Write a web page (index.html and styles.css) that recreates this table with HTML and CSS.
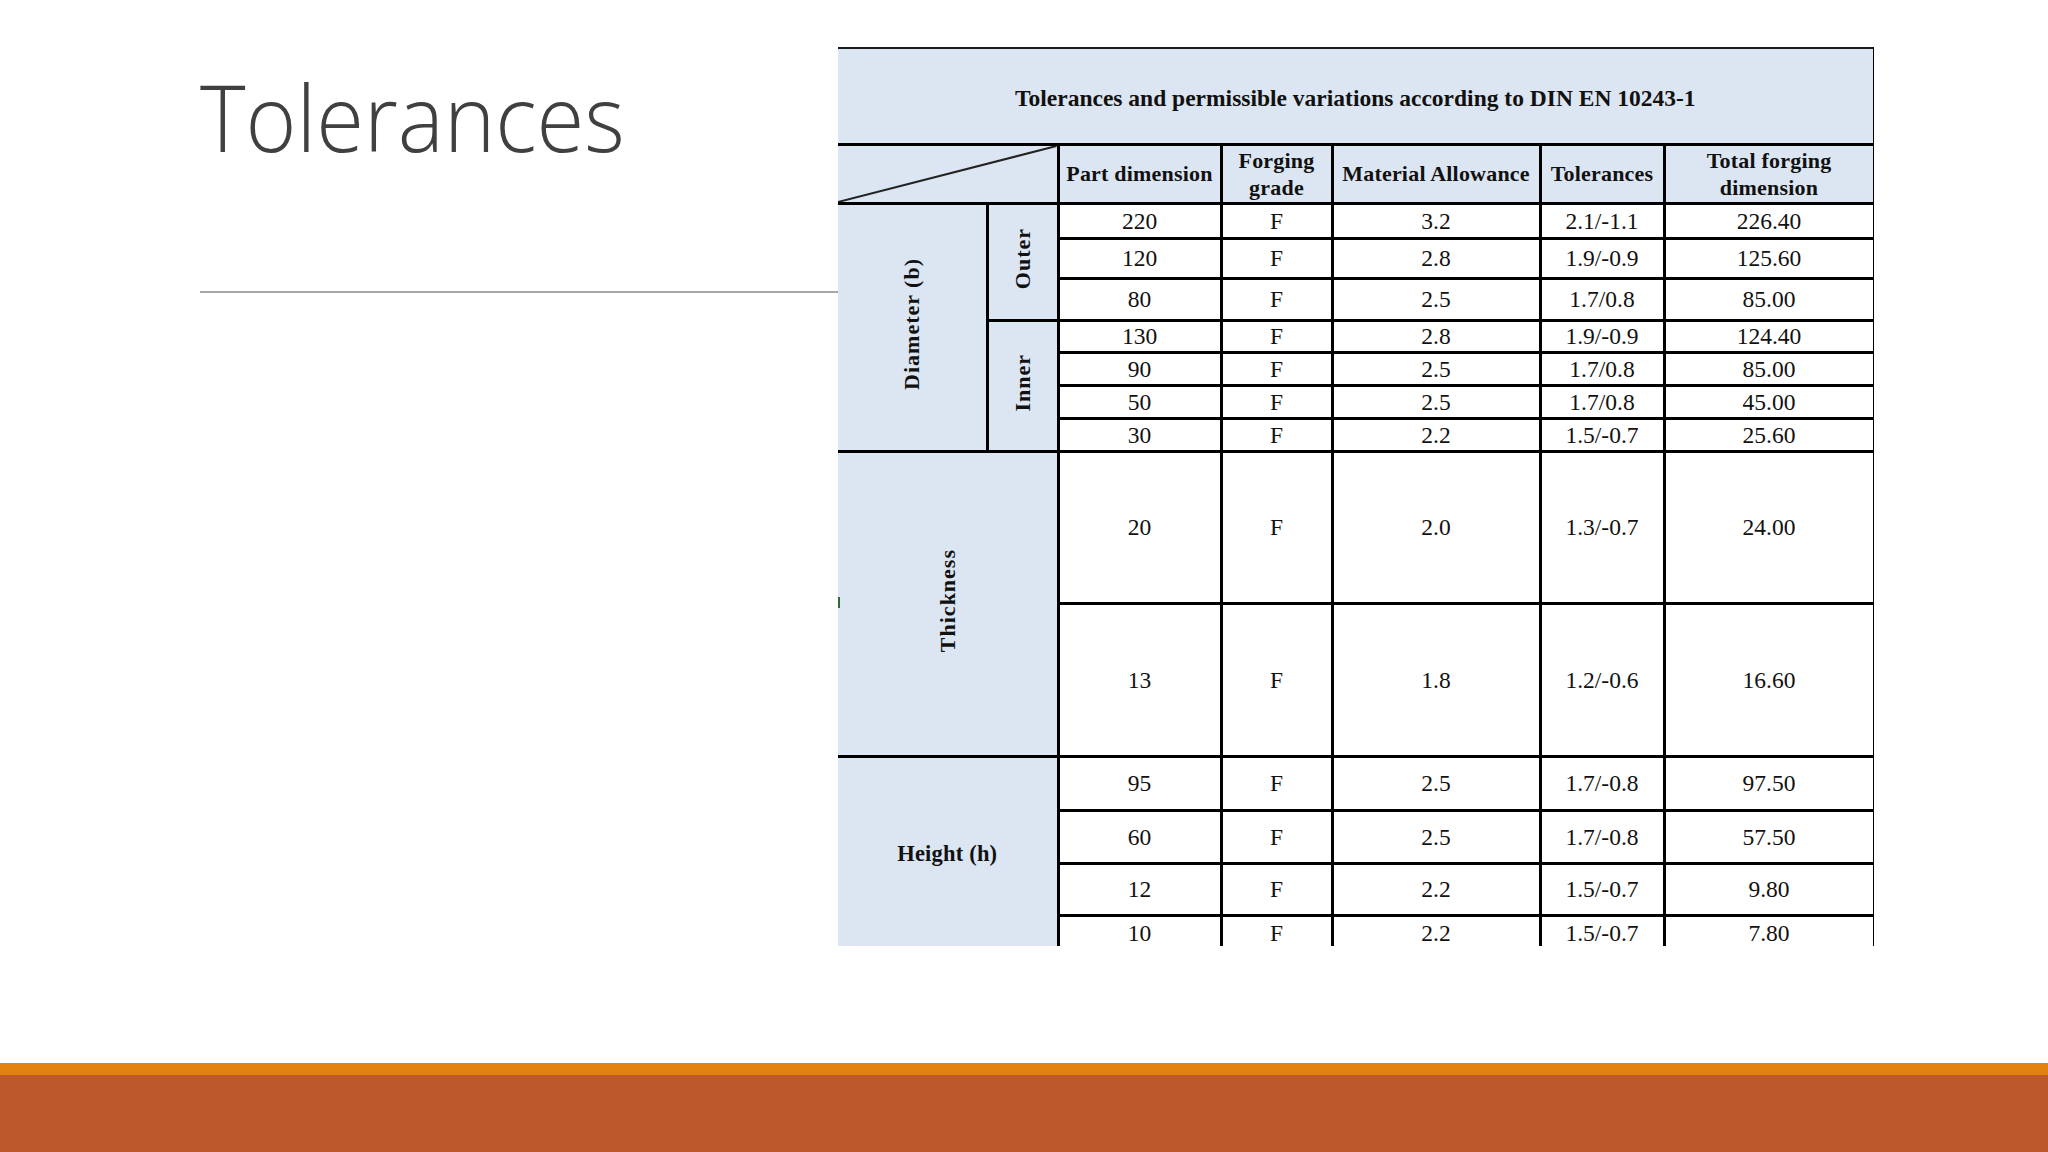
FILE: index.html
```html
<!DOCTYPE html>
<html lang="en">
<head>
<meta charset="utf-8">
<title>Tolerances</title>
<link rel="stylesheet" href="styles.css">
</head>
<body>
<div class="slide">
  <div class="content">
    <div class="left">
      <h1 class="title"><span>Tolerances</span></h1>
      <div class="rule"></div>
    </div>
    <div class="tablewrap">
      <span class="speck"></span>
      <table class="tol">
        <colgroup>
          <col class="c1"><col class="c2"><col class="c3"><col class="c4"><col class="c5"><col class="c6"><col class="c7">
        </colgroup>
        <tr class="r-title">
          <th colspan="7" class="ttl">Tolerances and permissible variations according to DIN EN 10243-1</th>
        </tr>
        <tr class="r-head">
          <th colspan="2" class="diag"><svg class="diag-line" viewBox="0 0 100 100" preserveAspectRatio="none"><line x1="0" y1="100" x2="100" y2="0"/></svg></th>
          <th>Part dimension</th>
          <th>Forging<br>grade</th>
          <th>Material Allowance</th>
          <th>Tolerances</th>
          <th>Total forging<br>dimension</th>
        </tr>
        <tr class="h35">
          <th rowspan="7" class="grp vert"><span>Diameter (b)</span></th>
          <th rowspan="3" class="sub vert"><span>Outer</span></th>
          <td>220</td><td>F</td><td>3.2</td><td>2.1/-1.1</td><td>226.40</td>
        </tr>
        <tr class="h40"><td>120</td><td>F</td><td>2.8</td><td>1.9/-0.9</td><td>125.60</td></tr>
        <tr class="h42"><td>80</td><td>F</td><td>2.5</td><td>1.7/0.8</td><td>85.00</td></tr>
        <tr class="h32">
          <th rowspan="4" class="sub vert"><span>Inner</span></th>
          <td>130</td><td>F</td><td>2.8</td><td>1.9/-0.9</td><td>124.40</td>
        </tr>
        <tr class="h33"><td>90</td><td>F</td><td>2.5</td><td>1.7/0.8</td><td>85.00</td></tr>
        <tr class="h33"><td>50</td><td>F</td><td>2.5</td><td>1.7/0.8</td><td>45.00</td></tr>
        <tr class="h33"><td>30</td><td>F</td><td>2.2</td><td>1.5/-0.7</td><td>25.60</td></tr>
        <tr class="h152">
          <th rowspan="2" colspan="2" class="grp vert"><span>Thickness</span></th>
          <td>20</td><td>F</td><td>2.0</td><td>1.3/-0.7</td><td>24.00</td>
        </tr>
        <tr class="h153"><td>13</td><td>F</td><td>1.8</td><td>1.2/-0.6</td><td>16.60</td></tr>
        <tr class="h54">
          <th rowspan="4" colspan="2" class="grp hgt">Height (h)</th>
          <td>95</td><td>F</td><td>2.5</td><td>1.7/-0.8</td><td>97.50</td>
        </tr>
        <tr class="h53"><td>60</td><td>F</td><td>2.5</td><td>1.7/-0.8</td><td>57.50</td></tr>
        <tr class="h52"><td>12</td><td>F</td><td>2.2</td><td>1.5/-0.7</td><td>9.80</td></tr>
        <tr class="h34 last"><td>10</td><td>F</td><td>2.2</td><td>1.5/-0.7</td><td>7.80</td></tr>
      </table>
    </div>
  </div>
  <div class="footer">
    <div class="stripe"></div>
    <div class="band"></div>
  </div>
</div>
</body>
</html>
```

FILE: styles.css
```css
html, body {
  margin: 0;
  padding: 0;
  background: #ffffff;
}

.slide {
  width: 2048px;
  height: 1152px;
  display: flex;
  flex-direction: column;
  overflow: hidden;
  background: #ffffff;
}

.content {
  flex: 1;
  display: flex;
  padding-left: 200px;
}

.left {
  width: 638px;
  flex: none;
}

.title {
  margin: 62px 0 0;
  font-family: "Open Sans", "Noto Sans", sans-serif;
  font-weight: 300;
  font-size: 92px;
  line-height: 110px;
  color: #404040;
  white-space: nowrap;
}

.title span {
  display: inline-block;
  transform: scaleX(0.945);
  transform-origin: left center;
}

.rule {
  margin-top: 119px;
  height: 2px;
  background: #a6a6a6;
}

.tablewrap {
  position: relative;
  flex: none;
  margin-top: 47px;
  width: 1036px;
  height: 899px;
  overflow: hidden;
}

.speck {
  position: absolute;
  left: 0;
  top: 550px;
  width: 2px;
  height: 11px;
  background: #2f6b3f;
  z-index: 2;
}

.tol {
  border-collapse: collapse;
  table-layout: fixed;
  width: 1036px;
  font-family: "Liberation Serif", "Times New Roman", serif;
  color: #111111;
}

.c1 { width: 149px; }
.c2 { width: 71px; }
.c3 { width: 163px; }
.c4 { width: 111px; }
.c5 { width: 208px; }
.c6 { width: 124px; }
.c7 { width: 210px; }

.tol td,
.tol th {
  border: 3px solid #000000;
  padding: 0;
  text-align: center;
  vertical-align: middle;
}

.tol td {
  font-size: 23.5px;
  line-height: 26px;
  background: #ffffff;
}

.tol th {
  font-weight: bold;
  font-size: 22px;
  line-height: 27px;
  letter-spacing: 0.2px;
  background: #dce6f2;
}

.tol .ttl {
  border-top: 2px solid #1a1a1a;
  border-left: none;
  padding-top: 6px;
  font-size: 23.5px;
  letter-spacing: 0;
}

.tol .diag {
  position: relative;
  border-left: none;
}

.diag-line {
  position: absolute;
  left: 0;
  top: 0;
  width: 100%;
  height: 100%;
}

.diag-line line {
  stroke: #222222;
  stroke-width: 2;
  vector-effect: non-scaling-stroke;
}

.tol .grp {
  border-left: none;
}

.vert span {
  display: inline-block;
  writing-mode: vertical-rl;
  transform: rotate(180deg);
  font-size: 22px;
  letter-spacing: 1px;
}

.tol .hgt {
  font-size: 22.5px;
  border-bottom: none;
}

.tol .last td {
  border-bottom: none;
  vertical-align: top;
  padding-top: 3px;
}

.r-title { height: 96px; }
.r-head { height: 59px; }
.h32 { height: 32px; }
.h33 { height: 33px; }
.h34 { height: 34px; }
.h35 { height: 35px; }
.h40 { height: 40px; }
.h42 { height: 42px; }
.h52 { height: 52px; }
.h53 { height: 53px; }
.h54 { height: 54px; }
.h152 { height: 152px; }
.h153 { height: 153px; }

.footer {
  flex: none;
}

.stripe {
  height: 12px;
  background: #e1820f;
}

.band {
  height: 77px;
  background: #bd582c;
}
```
